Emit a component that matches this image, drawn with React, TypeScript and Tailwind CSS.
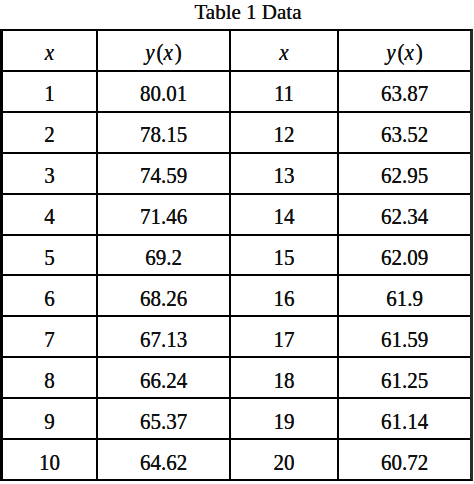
const rows: [string, string, string, string][] = [
  ["1", "80.01", "11", "63.87"],
  ["2", "78.15", "12", "63.52"],
  ["3", "74.59", "13", "62.95"],
  ["4", "71.46", "14", "62.34"],
  ["5", "69.2", "15", "62.09"],
  ["6", "68.26", "16", "61.9"],
  ["7", "67.13", "17", "61.59"],
  ["8", "66.24", "18", "61.25"],
  ["9", "65.37", "19", "61.14"],
  ["10", "64.62", "20", "60.72"],
];

const Cell = ({ children }: { children: React.ReactNode }) => (
  <div className="flex items-center justify-center bg-white pt-[5px] leading-none">
    <span className="inline-block scale-y-[1.1]">{children}</span>
  </div>
);

const Yx = () => (
  <span>
    <i>y</i>
    <span className="ml-[2px]">(</span>
    <i>x</i>
    <span className="ml-[2px]">)</span>
  </span>
);

export default function App() {
  return (
    <div className="w-[474px] h-[484px] bg-white text-[#111] [text-shadow:0_0_0.4px_#000] [font-family:'Liberation_Serif','Times_New_Roman',serif]">
      <div className="h-[29px] pl-[22px] pt-[1px] text-center text-[21px] leading-[23px]">Table 1 Data</div>
      <div className="w-[473px] h-[452px] grid grid-cols-[93px_131px_106px_131px] grid-rows-[repeat(11,minmax(0,1fr))] gap-[2px] bg-black border-t-2 border-b-2 border-l-[3px] border-r-[3px] border-t-black border-b-black border-l-black border-r-[#2b2b2b] text-[21px]">
        <Cell><i>x</i></Cell>
        <Cell><Yx /></Cell>
        <Cell><i>x</i></Cell>
        <Cell><Yx /></Cell>
        {rows.map((r) => r.map((v, i) => <Cell key={r[0] + "-" + i}>{v}</Cell>))}
      </div>
    </div>
  );
}
